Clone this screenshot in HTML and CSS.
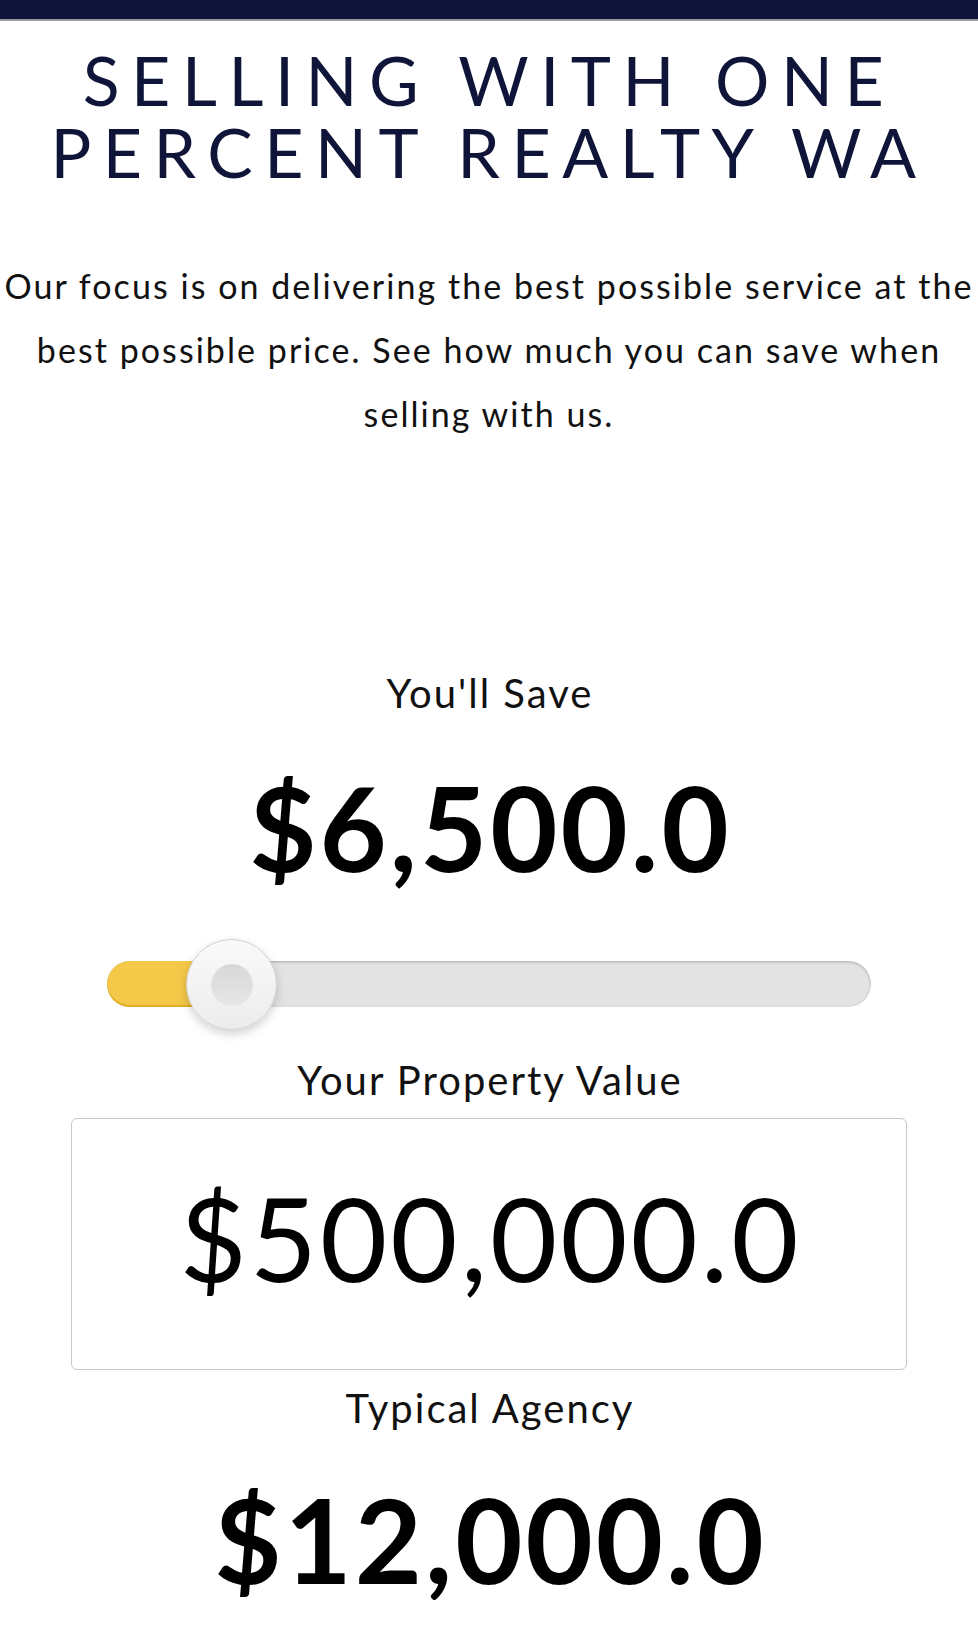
FILE: index.html
```html
<!DOCTYPE html>
<html lang="en">
<head>
    <meta charset="UTF-8">
    <meta name="viewport" content="width=device-width, initial-scale=1.0">
    <title>Selling With One Percent Realty WA</title>
    <link rel="stylesheet" href="styles.css">
</head>
<body>
    <div class="topbar"></div>

    <section class="intro">
        <h1 class="title">Selling with One Percent Realty WA</h1>
        <p class="lead">Our focus is on delivering the best possible service at the best possible price. See how much you can save when selling with us.</p>
    </section>

    <section class="calc">
        <div class="calc-label">You'll Save</div>
        <div class="calc-amount">$6,500.0</div>

        <div class="slider">
            <div class="slider-track">
                <div class="slider-fill" style="width: 124px"></div>
                <div class="slider-thumb" style="left: 124px"><span class="slider-dot"></span></div>
            </div>
        </div>

        <div class="calc-label label-property">Your Property Value</div>
        <div class="value-box">
            <span class="value-text">$500,000.0</span>
        </div>

        <div class="calc-label label-agency">Typical Agency</div>
        <div class="calc-amount amount-agency">$12,000.0</div>
    </section>
</body>
</html>
```

FILE: styles.css
```css
body {
    margin: 0;
    background-color: #fff;
    font-family: Lato, "Open Sans", sans-serif;
    color: #111;
}
.topbar {
    height: 19px;
    background-color: #0e1538;
    border-bottom: 2px solid #9a9a9a;
}
.intro {
    text-align: center;
}
.title {
    margin: 23px 0 0;
    font-size: 68px;
    font-weight: 400;
    line-height: 72px;
    letter-spacing: 0.17em;
    text-transform: uppercase;
    color: #0e1538;
}
.lead {
    margin: 66px 0 0;
    font-size: 34px;
    line-height: 64px;
    letter-spacing: 2.05px;
}
.calc {
    display: flex;
    flex-direction: column;
    align-items: center;
}
.calc-label {
    margin-top: 223px;
    padding-left: 2px;
    font-size: 40px;
    line-height: 48px;
    letter-spacing: 2px;
}
.calc-amount {
    margin-top: 51px;
    padding-left: 3px;
    font-size: 116px;
    font-weight: 700;
    line-height: 120px;
    letter-spacing: 3px;
    color: #000;
}
.slider {
    width: 764px;
    margin-top: 51px;
    padding: 22px 0;
}
.slider-track {
    position: relative;
    height: 46px;
    border-radius: 23px;
    background-color: #e3e3e3;
    box-shadow: inset 0 1px 3px rgba(0,0,0,0.25);
}
.slider-fill {
    height: 100%;
    border-radius: 23px 0 0 23px;
    background-color: #f4c94a;
    box-shadow: inset 0 -2px 0 #e0b020;
}
.slider-thumb {
    position: absolute;
    top: 50%;
    width: 89px;
    height: 89px;
    margin: -45px 0 0 -45px;
    border-radius: 50%;
    border: 1px solid #cfcfcf;
    background: linear-gradient(#fafafa, #ececec);
    box-shadow: 0 4px 10px rgba(0,0,0,0.18);
    display: flex;
    align-items: center;
    justify-content: center;
}
.slider-dot {
    width: 42px;
    height: 42px;
    border-radius: 50%;
    background: linear-gradient(#d8d8d8, #e6e6e6);
}
.label-property {
    margin-top: 27px;
}
.value-box {
    width: 834px;
    height: 238px;
    margin-top: 14px;
    padding-bottom: 12px;
    border: 1px solid #c8c8c8;
    border-radius: 6px;
    display: flex;
    align-items: center;
    justify-content: center;
}
.value-text {
    padding-left: 3px;
    font-size: 116px;
    line-height: 120px;
    letter-spacing: 3px;
    color: #000;
}
.label-agency {
    margin-top: 14px;
}
.amount-agency {
    margin-top: 48px;
}
```
